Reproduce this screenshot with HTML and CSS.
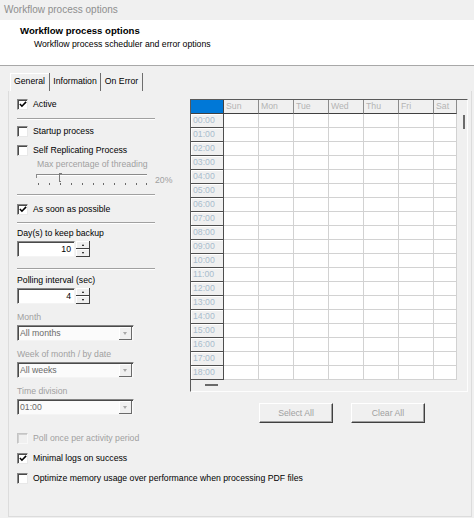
FILE: index.html
```html
<!DOCTYPE html>
<html>
<head>
<meta charset="utf-8">
<link rel="stylesheet" href="styles.css">
</head>
<body>
<div class="window">
  <div class="titlebar">Workflow process options</div>
  <div class="header">
    <div class="h-title">Workflow process options</div>
    <div class="h-sub">Workflow process scheduler and error options</div>
  </div>
  <div class="tabs">
    <div class="tab tab-general active">General</div>
    <div class="tab tab-info">Information</div>
    <div class="tab tab-error">On Error</div>
  </div>
  <div class="panel">
    <div class="top">
      <div class="left">
        <div class="check"><span class="box"><svg width="9" height="9" viewBox="0 0 9 9"><path d="M1 4 L3.3 6.4 L8 1.6" fill="none" stroke="#000" stroke-width="1.8"/></svg></span><span class="lbl">Active</span></div>
        <div class="sep sep-a"></div>
        <div class="check m4"><span class="box"></span><span class="lbl">Startup process</span></div>
        <div class="check m5"><span class="box"></span><span class="lbl">Self Replicating Process</span></div>
        <div class="label dim indent">Max percentage of threading</div>
        <div class="slider">
          <svg width="115" height="17" viewBox="0 0 115 17">
            <rect x="0" y="3" width="111" height="1" fill="#8a8a8a"/>
            <rect x="1" y="4" width="110" height="1" fill="#ffffff"/>
            <rect x="0" y="3" width="1" height="4" fill="#8a8a8a"/>
            <rect x="23" y="2" width="1" height="9" fill="#7a7a7a"/>
            <rect x="24" y="2" width="2" height="1" fill="#7a7a7a"/>
            <rect x="24" y="10" width="1" height="1" fill="#7a7a7a"/>
            <g fill="#6a6a6a">
              <rect x="2" y="12" width="1" height="2"/>
              <rect x="13" y="12" width="1" height="2"/>
              <rect x="24" y="12" width="1" height="2"/>
              <rect x="35" y="12" width="1" height="2"/>
              <rect x="46" y="12" width="1" height="2"/>
              <rect x="57" y="12" width="1" height="2"/>
              <rect x="67" y="12" width="1" height="2"/>
              <rect x="78" y="12" width="1" height="2"/>
              <rect x="89" y="12" width="1" height="2"/>
              <rect x="100" y="12" width="1" height="2"/>
              <rect x="110" y="12" width="1" height="2"/>
            </g>
          </svg>
          <span class="pct">20%</span>
        </div>
        <div class="sep m6"></div>
        <div class="check m6"><span class="box"><svg width="9" height="9" viewBox="0 0 9 9"><path d="M1 4 L3.3 6.4 L8 1.6" fill="none" stroke="#000" stroke-width="1.8"/></svg></span><span class="lbl">As soon as possible</span></div>
        <div class="sep m6"></div>
        <div class="label m2">Day(s) to keep backup</div>
        <div class="spin m1">
          <div class="spin-input">10</div>
          <div class="spin-btns">
            <div class="spin-btn"><span class="arr-up"></span></div>
            <div class="spin-btn"><span class="arr-down"></span></div>
          </div>
        </div>
        <div class="sep m11"></div>
        <div class="label m3">Polling interval (sec)</div>
        <div class="spin m1">
          <div class="spin-input">4</div>
          <div class="spin-btns">
            <div class="spin-btn"><span class="arr-up"></span></div>
            <div class="spin-btn"><span class="arr-down"></span></div>
          </div>
        </div>
        <div class="label dim m6">Month</div>
        <div class="combo m1"><span class="combo-text">All months</span><span class="combo-btn"><span class="arr-down-dim"></span></span></div>
        <div class="label dim m6">Week of month / by date</div>
        <div class="combo m1"><span class="combo-text">All weeks</span><span class="combo-btn"><span class="arr-down-dim"></span></span></div>
        <div class="label dim m6">Time division</div>
        <div class="combo m1"><span class="combo-text">01:00</span><span class="combo-btn"><span class="arr-down-dim"></span></span></div>
      </div>
      <div class="right">
        <div class="grid-frame">
          <div class="grid-main">
            <div class="grid">
              <div class="corner"></div><div class="ch">Sun</div><div class="ch">Mon</div><div class="ch">Tue</div><div class="ch">Wed</div><div class="ch">Thu</div><div class="ch">Fri</div><div class="ch">Sat</div>
              <div class="rh">00:00</div><div class="c"></div><div class="c"></div><div class="c"></div><div class="c"></div><div class="c"></div><div class="c"></div><div class="c"></div>
              <div class="rh">01:00</div><div class="c"></div><div class="c"></div><div class="c"></div><div class="c"></div><div class="c"></div><div class="c"></div><div class="c"></div>
              <div class="rh">02:00</div><div class="c"></div><div class="c"></div><div class="c"></div><div class="c"></div><div class="c"></div><div class="c"></div><div class="c"></div>
              <div class="rh">03:00</div><div class="c"></div><div class="c"></div><div class="c"></div><div class="c"></div><div class="c"></div><div class="c"></div><div class="c"></div>
              <div class="rh">04:00</div><div class="c"></div><div class="c"></div><div class="c"></div><div class="c"></div><div class="c"></div><div class="c"></div><div class="c"></div>
              <div class="rh">05:00</div><div class="c"></div><div class="c"></div><div class="c"></div><div class="c"></div><div class="c"></div><div class="c"></div><div class="c"></div>
              <div class="rh">06:00</div><div class="c"></div><div class="c"></div><div class="c"></div><div class="c"></div><div class="c"></div><div class="c"></div><div class="c"></div>
              <div class="rh">07:00</div><div class="c"></div><div class="c"></div><div class="c"></div><div class="c"></div><div class="c"></div><div class="c"></div><div class="c"></div>
              <div class="rh">08:00</div><div class="c"></div><div class="c"></div><div class="c"></div><div class="c"></div><div class="c"></div><div class="c"></div><div class="c"></div>
              <div class="rh">09:00</div><div class="c"></div><div class="c"></div><div class="c"></div><div class="c"></div><div class="c"></div><div class="c"></div><div class="c"></div>
              <div class="rh">10:00</div><div class="c"></div><div class="c"></div><div class="c"></div><div class="c"></div><div class="c"></div><div class="c"></div><div class="c"></div>
              <div class="rh">11:00</div><div class="c"></div><div class="c"></div><div class="c"></div><div class="c"></div><div class="c"></div><div class="c"></div><div class="c"></div>
              <div class="rh">12:00</div><div class="c"></div><div class="c"></div><div class="c"></div><div class="c"></div><div class="c"></div><div class="c"></div><div class="c"></div>
              <div class="rh">13:00</div><div class="c"></div><div class="c"></div><div class="c"></div><div class="c"></div><div class="c"></div><div class="c"></div><div class="c"></div>
              <div class="rh">14:00</div><div class="c"></div><div class="c"></div><div class="c"></div><div class="c"></div><div class="c"></div><div class="c"></div><div class="c"></div>
              <div class="rh">15:00</div><div class="c"></div><div class="c"></div><div class="c"></div><div class="c"></div><div class="c"></div><div class="c"></div><div class="c"></div>
              <div class="rh">16:00</div><div class="c"></div><div class="c"></div><div class="c"></div><div class="c"></div><div class="c"></div><div class="c"></div><div class="c"></div>
              <div class="rh">17:00</div><div class="c"></div><div class="c"></div><div class="c"></div><div class="c"></div><div class="c"></div><div class="c"></div><div class="c"></div>
              <div class="rh">18:00</div><div class="c"></div><div class="c"></div><div class="c"></div><div class="c"></div><div class="c"></div><div class="c"></div><div class="c"></div>
            </div>
            <div class="hscroll"><span class="hthumb"></span></div>
          </div>
          <div class="vscroll"><span class="vthumb"></span></div>
        </div>
        <div class="buttons">
          <button class="btn">Select All</button>
          <button class="btn">Clear All</button>
        </div>
      </div>
    </div>
    <div class="bottom">
      <div class="check disabled"><span class="box"></span><span class="lbl">Poll once per activity period</span></div>
      <div class="check m6"><span class="box"><svg width="9" height="9" viewBox="0 0 9 9"><path d="M1 4 L3.3 6.4 L8 1.6" fill="none" stroke="#000" stroke-width="1.8"/></svg></span><span class="lbl">Minimal logs on success</span></div>
      <div class="check m6"><span class="box"></span><span class="lbl">Optimize memory usage over performance when processing PDF files</span></div>
    </div>
  </div>
</div>
</body>
</html>
```

FILE: styles.css
```css
* { box-sizing: border-box; }
html, body { margin: 0; padding: 0; }
body {
  width: 474px;
  height: 518px;
  overflow: hidden;
  background: #f0f0f0;
  font-family: "Liberation Sans", Arial, sans-serif;
  font-size: 8.7px;
  color: #000;
}
.window { width: 474px; height: 518px; display: flex; flex-direction: column; }

.titlebar {
  height: 20px;
  line-height: 20px;
  padding-left: 4px;
  font-size: 10px;
  color: #8e8e8e;
  background: #f0f0f0;
}
.header {
  height: 46px;
  background: #fff;
  border-bottom: 1px solid #a8a8a8;
  padding-top: 5px;
}
.h-title { font-weight: bold; font-size: 9.6px; line-height: 12px; padding-left: 20px; }
.h-sub { line-height: 12px; margin-top: 1px; padding-left: 34px; }

.tabs { display: flex; padding: 7px 0 0 10px; height: 25px; }
.tab {
  height: 18px;
  line-height: 16px;
  text-align: center;
  border-right: 1px solid #6e6e6e;
}
.tab-general { width: 40px; }
.tab-info { width: 51px; }
.tab-error { width: 42px; }
.tab.active { box-shadow: inset 1px 1px 0 #fff; }

.panel {
  margin: 0 2px 0 8px;
  height: 426px;
  border: 1px solid #dcdcdc;
  border-top: none;
  padding-left: 8px;
}
.top { display: flex; }
.left { width: 173px; padding-top: 6px; display: flex; flex-direction: column; }
.right { padding-top: 8px; }

.check { height: 14px; display: flex; align-items: center; }
.box {
  width: 11px; height: 11px;
  background: #fff;
  border: 1px solid;
  border-color: #858585 #e8e8e8 #e8e8e8 #858585;
  box-shadow: inset 1px 1px 0 #4a4a4a;
  display: flex; align-items: center; justify-content: center;
  padding: 1px 0 0 1px;
}
.box svg { display: block; }
.lbl { margin-left: 5px; white-space: nowrap; }
.check.disabled .box { background: #f0f0f0; border-color: #c4c4c4 #f8f8f8 #f8f8f8 #c4c4c4; box-shadow: inset 1px 1px 0 #d0d0d0; }
.check.disabled .lbl { color: #a0a0a0; }

.sep { width: 138px; height: 2px; border-top: 1px solid #a0a0a0; border-bottom: 1px solid #fff; }
.sep-a { margin-top: 7px; }
.m1 { margin-top: 1px; }
.m2 { margin-top: 2px; }
.m3 { margin-top: 3px; }
.m4 { margin-top: 4px; }
.m5 { margin-top: 5px; }
.m6 { margin-top: 6px; }
.m11 { margin-top: 11px; }

.label { height: 14px; line-height: 14px; white-space: nowrap; }
.dim { color: #a0a0a0; }
.indent { padding-left: 20px; }

.slider { height: 17px; display: flex; align-items: center; padding-left: 19px; }
.slider svg { display: block; }
.pct { color: #a0a0a0; margin-left: 4px; }

.spin { display: flex; height: 16px; }
.spin-input {
  width: 58px; height: 16px;
  background: #fff;
  border: 1px solid;
  border-color: #858585 #f4f4f4 #f4f4f4 #858585;
  box-shadow: inset 1px 1px 0 #4a4a4a;
  text-align: right;
  padding-right: 3px;
  line-height: 14px;
}
.spin-btns { width: 14px; margin-left: 1px; display: flex; flex-direction: column; }
.spin-btn {
  height: 8px;
  background: #f0f0f0;
  border-right: 1px solid #404040;
  border-bottom: 1px solid #404040;
  box-shadow: inset 1px 1px 0 #fff;
  display: flex; align-items: center; justify-content: center;
}
.arr-up { width: 0; height: 0; border-left: 1.5px solid transparent; border-right: 1.5px solid transparent; border-bottom: 2px solid #000; }
.arr-down { width: 0; height: 0; border-left: 1.5px solid transparent; border-right: 1.5px solid transparent; border-top: 2px solid #000; }

.combo {
  width: 117px; height: 16px;
  display: flex;
  background: #fbfbfb;
  border: 1px solid;
  border-color: #858585 #f4f4f4 #f4f4f4 #858585;
  box-shadow: inset 1px 1px 0 #4a4a4a;
}
.combo-text { flex: 1; padding-left: 2px; line-height: 14px; color: #6a6a6a; }
.combo-btn {
  width: 13px; height: 13px;
  margin: 1px 1px 0 0;
  background: #f0f0f0;
  border-right: 1px solid #6a6a6a;
  border-bottom: 1px solid #6a6a6a;
  box-shadow: inset 1px 1px 0 #fff;
  display: flex; align-items: center; justify-content: center;
}
.arr-down-dim { width: 0; height: 0; border-left: 2.5px solid transparent; border-right: 2.5px solid transparent; border-top: 3px solid #a8a8a8; }

.grid-frame {
  width: 278px;
  display: flex;
  border-top: 1px solid #5a5a5a;
  border-left: 1px solid #5a5a5a;
  border-right: 1px solid #fdfdfd;
  border-bottom: 1px solid #fdfdfd;
}
.grid-main { width: 266px; }
.grid {
  display: grid;
  grid-template-columns: 33px repeat(6, 35px) 23px;
  grid-auto-rows: 14px;
  background: #fff;
}
.corner { background: #0078d7; border-right: 1px solid #404040; border-bottom: 1px solid #404040; }
.ch {
  background: #f0f0f0;
  border-right: 1px solid #8c8c8c;
  border-bottom: 1px solid #404040;
  color: #b4b4b4;
  padding-left: 2px;
  line-height: 13px;
}
.rh {
  background: #f0f0f0;
  border-right: 1px solid #4e4e4e;
  border-bottom: 1px solid #4e4e4e;
  box-shadow: inset 1px 1px 0 #fff;
  color: #a9bccd;
  padding-left: 2px;
  line-height: 13px;
}
.c { border-right: 1px solid #d2d2d2; border-bottom: 1px solid #d2d2d2; }

.hscroll { height: 11px; background: #f0f0f0; padding: 4px 0 0 14px; }
.hthumb { display: block; width: 13px; height: 2px; background: #6a6a6a; }
.vscroll { width: 10px; background: #f0f0f0; padding: 15px 0 0 6px; }
.vthumb { display: block; width: 2px; height: 14px; background: #6a6a6a; }

.buttons { display: flex; gap: 18px; padding-left: 69px; margin-top: 11px; }
.btn {
  width: 74px; height: 20px;
  background: #f0f0f0;
  border: 1px solid;
  border-color: #fff #404040 #404040 #fff;
  box-shadow: inset -1px -1px 0 #a0a0a0;
  font-family: "Liberation Sans", Arial, sans-serif;
  font-size: 8.7px;
  color: #a0a0a0;
  padding: 0;
}

.bottom { margin-top: 8px; display: flex; flex-direction: column; }
```
